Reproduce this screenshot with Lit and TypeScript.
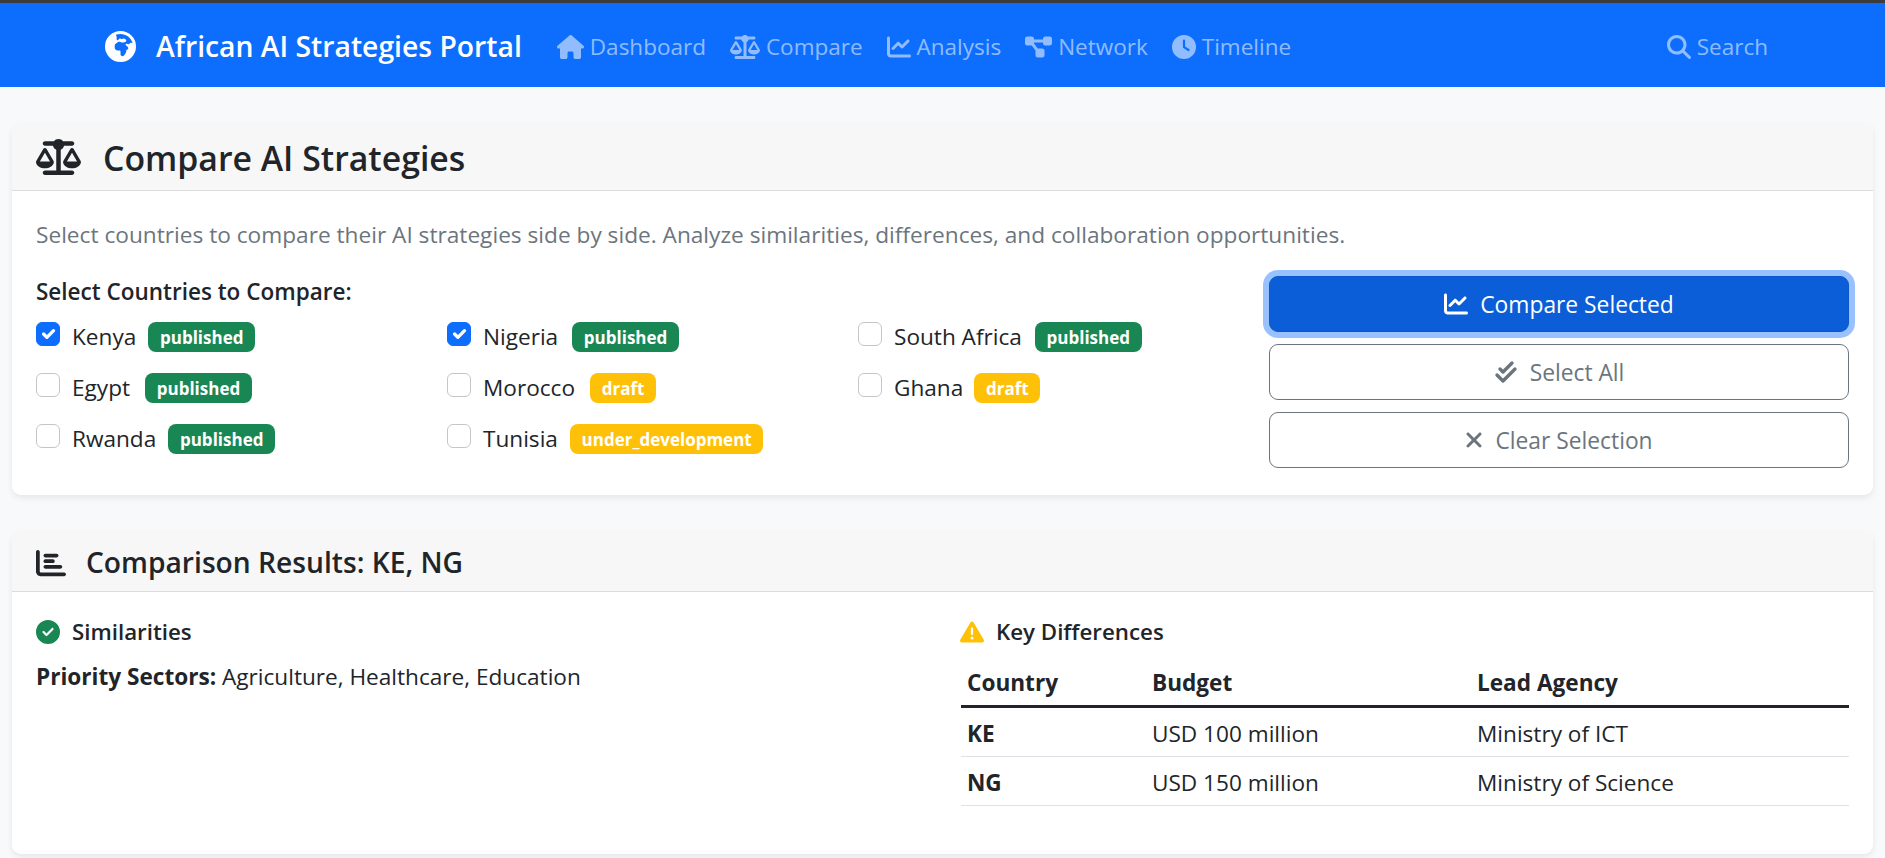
import { LitElement, html, css, svg } from "lit";
import { customElement } from "lit/decorators.js";

const P = {
  house: "M575.8 255.5c0 18-15 32.1-32 32.1h-32l.7 160.2c0 2.7-.2 5.4-.5 8.1V472c0 22.1-17.9 40-40 40H456c-1.1 0-2.2 0-3.3-.1c-1.4 .1-2.8 .1-4.2 .1H416 392c-22.1 0-40-17.9-40-40V448 384c0-17.7-14.3-32-32-32H256c-17.7 0-32 14.3-32 32v64 24c0 22.1-17.9 40-40 40H160 128.1c-1.5 0-3-.1-4.5-.2c-1.2 .1-2.4 .2-3.6 .2H104c-22.1 0-40-17.9-40-40V360c0-.9 0-1.9 .1-2.8V287.6H32c-18 0-32-14-32-32.1c0-9 3-17 10-24L266.4 8c7-7 15-8 22-8s15 2 21 7L564.8 231.5c8 7 12 15 11 24z",
  scale: "M384 32H512c17.7 0 32 14.3 32 32s-14.3 32-32 32H398.4c-5.2 25.8-22.9 47.1-46.4 57.3V448H512c17.7 0 32 14.3 32 32s-14.3 32-32 32H320 128c-17.7 0-32-14.3-32-32s14.3-32 32-32H288V153.3c-23.5-10.3-41.2-31.6-46.4-57.3H128c-17.7 0-32-14.3-32-32s14.3-32 32-32H256c14.6-19.4 37.8-32 64-32s49.4 12.6 64 32zm55.6 288H584.4L512 195.8 439.6 320zM512 416c-62.9 0-115.2-34-126-78.9c-2.6-11 1-22.3 6.7-32.1l95.2-163.2c5-8.6 14.2-13.8 24.1-13.8s19.1 5.3 24.1 13.8l95.2 163.2c5.7 9.8 9.3 21.1 6.7 32.1C627.2 382 574.9 416 512 416zM126.8 195.8L54.4 320H199.3L126.8 195.8zM.9 337.1c-2.6-11 1-22.3 6.7-32.1l95.2-163.2c5-8.6 14.2-13.8 24.1-13.8s19.1 5.3 24.1 13.8l95.2 163.2c5.7 9.8 9.3 21.1 6.7 32.1C242 382 189.7 416 126.8 416S11.7 382 .9 337.1z",
  line: "M64 64c0-17.7-14.3-32-32-32S0 46.3 0 64V400c0 44.2 35.8 80 80 80H480c17.7 0 32-14.3 32-32s-14.3-32-32-32H80c-8.8 0-16-7.2-16-16V64zm406.6 86.6c12.5-12.5 12.5-32.8 0-45.3s-32.8-12.5-45.3 0L320 210.7l-57.4-57.4c-12.5-12.5-32.8-12.5-45.3 0l-112 112c-12.5 12.5-12.5 32.8 0 45.3s32.8 12.5 45.3 0L240 221.3l57.4 57.4c12.5 12.5 32.8 12.5 45.3 0l128-128z",
  diagram: "M0 80C0 53.5 21.5 32 48 32h96c26.5 0 48 21.5 48 48V96H384V80c0-26.5 21.5-48 48-48h96c26.5 0 48 21.5 48 48v96c0 26.5-21.5 48-48 48H432c-26.5 0-48-21.5-48-48V160H192v16c0 1.7-.1 3.4-.3 5L272 288h96c26.5 0 48 21.5 48 48v96c0 26.5-21.5 48-48 48H272c-26.5 0-48-21.5-48-48V336c0-1.7 .1-3.4 .3-5L144 224H48c-26.5 0-48-21.5-48-48V80z",
  clock: "M256 0a256 256 0 1 1 0 512A256 256 0 1 1 256 0zM232 120V256c0 8 4 15.5 10.7 20l96 64c11 7.4 25.9 4.4 33.3-6.7s4.4-25.9-6.7-33.3L280 243.2V120c0-13.3-10.7-24-24-24s-24 10.7-24 24z",
  search: "M416 208c0 45.9-14.9 88.3-40 122.7L502.6 457.4c12.5 12.5 12.5 32.8 0 45.3s-32.8 12.5-45.3 0L330.7 376c-34.4 25.2-76.8 40-122.7 40C93.1 416 0 322.9 0 208S93.1 0 208 0S416 93.1 416 208zM208 352a144 144 0 1 0 0-288 144 144 0 1 0 0 288z",
  xmark: "M342.6 150.6c12.5-12.5 12.5-32.8 0-45.3s-32.8-12.5-45.3 0L192 210.7 86.6 105.4c-12.5-12.5-32.8-12.5-45.3 0s-12.5 32.8 0 45.3L146.7 256 41.4 361.4c-12.5 12.5-12.5 32.8 0 45.3s32.8 12.5 45.3 0L192 301.3 297.4 406.6c12.5 12.5 32.8 12.5 45.3 0s12.5-32.8 0-45.3L237.3 256 342.6 150.6z",
  bars: "M32 32c17.7 0 32 14.3 32 32V400c0 8.8 7.2 16 16 16H480c17.7 0 32 14.3 32 32s-14.3 32-32 32H80c-44.2 0-80-35.8-80-80V64C0 46.3 14.3 32 32 32zm96 96c0-17.7 14.3-32 32-32l192 0c17.7 0 32 14.3 32 32s-14.3 32-32 32l-192 0c-17.7 0-32-14.3-32-32zm32 64H288c17.7 0 32 14.3 32 32s-14.3 32-32 32H160c-17.7 0-32-14.3-32-32s14.3-32 32-32zm0 96H416c17.7 0 32 14.3 32 32s-14.3 32-32 32H160c-17.7 0-32-14.3-32-32s14.3-32 32-32z",
  ok: "M256 512A256 256 0 1 0 256 0a256 256 0 1 0 0 512zM369 209L241 337c-9.4 9.4-24.6 9.4-33.9 0l-64-64c-9.4-9.4-9.4-24.6 0-33.9s24.6-9.4 33.9 0l47 47L335 175c9.4-9.4 24.6-9.4 33.9 0s9.4 24.6 0 33.9z",
  warn: "M256 32c14.2 0 27.3 7.5 34.5 19.8l216 368c7.3 12.4 7.3 27.7 .2 40.1S486.3 480 472 480H40c-14.3 0-27.6-7.7-34.7-20.1s-7-27.8 .2-40.1l216-368C228.7 39.5 241.8 32 256 32zm0 128c-13.3 0-24 10.7-24 24V296c0 13.3 10.7 24 24 24s24-10.7 24-24V184c0-13.3-10.7-24-24-24zm32 224a32 32 0 1 0 -64 0 32 32 0 1 0 64 0z",
  globe: "M177.8 63.2l10 17.4c2.8 4.8 4.2 10.3 4.2 15.9v41.4c0 3.9 1.6 7.7 4.3 10.4c6.2 6.2 16.5 5.7 22-1.2l13.6-17c4.7-5.9 12.9-7.7 19.6-4.3l15.2 7.6c3.4 1.7 7.2 2.6 11 2.6c6.5 0 12.8-2.6 17.4-7.2l3.9-3.9c2.9-2.9 7.3-3.6 11-1.8l29.2 14.6c7.8 3.9 12.6 11.8 12.6 20.5c0 10.5-7.1 19.6-17.3 22.2l-35.4 8.8c-7.4 1.8-15.1 1.5-22.4-.9l-32-10.7c-3.3-1.1-6.7-1.7-10.2-1.7c-7 0-13.8 2.3-19.4 6.5L176 212c-10.1 7.6-16 19.4-16 32v28c0 26.5 21.5 48 48 48h32c8.8 0 16 7.2 16 16v48c0 17.7 14.3 32 32 32c10.1 0 19.6-4.7 25.6-12.8l25.6-34.1c8.3-11.1 12.8-24.6 12.8-38.4V318.6c0-3.9 2.6-7.3 6.4-8.2l5.3-1.3c11.9-3 20.3-13.7 20.3-26c0-7.1-2.8-13.9-7.8-18.9l-33.5-33.5c-3.7-3.7-3.7-9.7 0-13.4c5.7-5.7 14.1-7.7 21.8-5.1l14.1 4.7c12.3 4.1 25.7-1.5 31.5-13c3.5-7 11.2-10.8 18.9-9.2l27.4 5.5C432 112.4 351.5 48 256 48c-27.7 0-54 5.4-78.2 15.2zM256 0a256 256 0 1 1 0 512A256 256 0 1 1 256 0z",
};

const ic = (d: string, vw: number, cls = "") =>
  html`<svg class="i ${cls}" viewBox="0 0 ${vw} 512" fill-rule="evenodd" aria-hidden="true">${svg`<path d=${d}></path>`}</svg>`;

const checkDouble = (cls = "") =>
  html`<svg class="i ${cls}" viewBox="0 0 448 512" aria-hidden="true">${svg`<path d="M352 64 160 256 96 192M416 192 160 448 32 320" fill="none" stroke="currentColor" stroke-width="72" stroke-linecap="round" stroke-linejoin="round"></path>`}</svg>`;

type C = { name: string; status: string; on?: boolean; extra?: number };
const COUNTRIES: C[] = [
  { name: "Kenya", status: "published", on: true },
  { name: "Nigeria", status: "published", on: true, extra: 2 },
  { name: "South Africa", status: "published", extra: 1 },
  { name: "Egypt", status: "published", extra: 3 },
  { name: "Morocco", status: "draft", extra: 3 },
  { name: "Ghana", status: "draft", extra: -1 },
  { name: "Rwanda", status: "published" },
  { name: "Tunisia", status: "under_development" },
];

const NAV: [string, string, number, string][] = [
  ["Dashboard", P.house, 576, "w27"],
  ["Compare", P.scale, 640, "w30"],
  ["Analysis", P.line, 512, "w24"],
  ["Network", P.diagram, 576, "w27"],
  ["Timeline", P.clock, 512, "w24"],
];

@customElement("app-root")
export class AppRoot extends LitElement {
  static styles = css`
    :host {
      display: block;
      background: #f8f9fa;
      color: #212529;
      font-family: "Open Sans", "Liberation Sans", sans-serif;
      font-size: 22.6px;
      line-height: 36px;
      height: 858px;
      overflow: hidden;
    }
    .i { height: 24px; width: 24px; fill: currentColor; flex: none; display: block; }
    .w27 { width: 27px; }
    .w30 { width: 30px; }
    .strip { height: 3px; background: #3c3c3c; }
    nav {
      height: 84px;
      box-sizing: border-box;
      background: #0d6efd;
      display: flex;
      align-items: center;
      padding: 2px 105px 0;
      color: rgba(255, 255, 255, 0.55);
    }
    .brand { display: flex; align-items: center; color: #fff; font-size: 28.3px; font-weight: 600; margin-right: 23px; }
    .globe { width: 31px; height: 31px; margin-right: 20px; }
    .link { display: flex; align-items: center; gap: 6px; padding: 12px; margin-top: 2px; font-size: 22.5px; }
    .search { margin-left: auto; }
    main { padding: 36px 12px 0; display: flex; flex-direction: column; gap: 36px; }
    .card { background: #fff; border-radius: 9px; box-shadow: 0 3px 6px rgba(0, 0, 0, 0.075); overflow: hidden; }
    .head {
      background: #f7f7f7;
      border-bottom: 1px solid #dcdcdd;
      padding: 12px 24px;
      display: flex;
      align-items: center;
    }
    h3, h4, h5 { margin: 0; font-weight: 600; }
    h3 { font-size: 33.8px; line-height: 40px; padding-top: 3px; }
    h4 { font-size: 28.2px; line-height: 33px; padding-top: 3px; }
    .h3i { width: 45px; height: 36px; margin-right: 22px; }
    .h4i { width: 30px; height: 30px; margin: 3px 20px 0 0; }
    .body { padding: 24px; }
    .lead { margin: 0 0 22px; padding-top: 2px; color: #6c757d; font-size: 22.67px; }
    .cols { display: grid; grid-template-columns: 1fr 580px; margin-bottom: 3px; }
    .label { font-weight: 600; margin: -1px 0 9px; font-size: 22.5px; }
    .grid { display: grid; grid-template-columns: repeat(3, 411px); row-gap: 15px; }
    .item { display: flex; align-items: center; height: 36px; }
    .box { width: 24px; height: 24px; box-sizing: border-box; border: 1px solid #c4c6c8; border-radius: 6px; margin: -6px 12px 0 0; background: #fff; flex: none; }
    .box.on { background: #0d6efd; border-color: #0d6efd; }
    .box svg { display: block; width: 22px; height: 22px; }
    .badge { margin-left: 12px; height: 30px; padding: 0 11.7px; border-radius: 8px; color: #fff; font-size: 17px; font-weight: 700; line-height: 32px; white-space: nowrap; }
    .published { background: #198754; }
    .pending { background: #ffc107; }
    .actions { display: flex; flex-direction: column; gap: 12px; margin-top: 1px; }
    .btn {
      height: 56px; box-sizing: border-box; border: 1px solid #6c757d; border-radius: 9px; background: #fff; color: #6c757d;
      display: flex; align-items: center; justify-content: center; gap: 12px; font: inherit; font-size: 22.8px; padding: 2px 0 0;
    }
    .btn .i { margin-top: -2px; }
    .btn.primary { background: #0b5ed7; border-color: #0a58ca; color: #fff; box-shadow: 0 0 0 6px rgba(49, 132, 253, 0.5); }
    .x { width: 18px; }
    .results { display: grid; grid-template-columns: 924px 1fr; height: 262px; box-sizing: border-box; padding-top: 22px; }
    .sub { display: flex; align-items: center; font-weight: 600; font-size: 22.3px; height: 36px; margin: 0 0 7px; }
    .sub .i { margin-right: 12px; }
    .ok { color: #198754; }
    .warn { color: #ffc107; margin-right: 12px !important; }
    .prio { margin: 9px 0 0; }
    b { font-weight: 700; }
    table { border-collapse: collapse; width: 888px; margin-left: 1px; table-layout: fixed; }
    th, td { text-align: left; padding: 8px 6px 4px; border-bottom: 1px solid #dee2e6; font-weight: 400; }
    th { font-weight: 700; border-bottom: 3px solid #212529; }
    td.k { font-weight: 700; }
    .c1 { width: 173px; }
    .c2 { width: 313px; }
  `;

  render() {
    return html`
      <div class="strip"></div>
      <nav>
        <div class="brand">${ic(P.globe, 512, "globe")}African AI Strategies Portal</div>
        ${NAV.map(([t, d, w, c]) => html`<div class="link">${ic(d, w, c)}<span>${t}</span></div>`)}
        <div class="link search">${ic(P.search, 512)}<span>Search</span></div>
      </nav>
      <main>
        <section class="card">
          <div class="head">${ic(P.scale, 640, "h3i")}<h3>Compare AI Strategies</h3></div>
          <div class="body">
            <p class="lead">Select countries to compare their AI strategies side by side. Analyze similarities, differences, and collaboration opportunities.</p>
            <div class="cols">
              <div>
                <div class="label">Select Countries to Compare:</div>
                <div class="grid">
                  ${COUNTRIES.map(
                    (c) => html`<div class="item">
                      <span class="box ${c.on ? "on" : ""}">
                        ${c.on
                          ? html`<svg viewBox="0 0 20 20">${svg`<path d="m6 10 3 3 6-6" fill="none" stroke="#fff" stroke-width="3" stroke-linecap="round" stroke-linejoin="round"></path>`}</svg>`
                          : ""}
                      </span>
                      <span style="margin-right:${c.extra ?? 0}px">${c.name}</span>
                      <span class="badge ${c.status === "published" ? "published" : "pending"}">${c.status}</span>
                    </div>`
                  )}
                </div>
              </div>
              <div class="actions">
                <button class="btn primary">${ic(P.line, 512)}Compare Selected</button>
                <button class="btn">${checkDouble()}Select All</button>
                <button class="btn">${ic(P.xmark, 384, "x")}Clear Selection</button>
              </div>
            </div>
          </div>
        </section>
        <section class="card">
          <div class="head">${ic(P.bars, 512, "h4i")}<h4>Comparison Results: KE, NG</h4></div>
          <div class="body results">
            <div>
              <div class="sub">${ic(P.ok, 512, "ok")}Similarities</div>
              <p class="prio"><b>Priority Sectors:</b> Agriculture, Healthcare, Education</p>
            </div>
            <div>
              <div class="sub">${ic(P.warn, 512, "warn")}Key Differences</div>
              <table>
                <thead><tr><th class="c1">Country</th><th class="c2">Budget</th><th>Lead Agency</th></tr></thead>
                <tbody>
                  <tr><td class="k">KE</td><td>USD 100 million</td><td>Ministry of ICT</td></tr>
                  <tr><td class="k">NG</td><td>USD 150 million</td><td>Ministry of Science</td></tr>
                </tbody>
              </table>
            </div>
          </div>
        </section>
      </main>
    `;
  }
}
